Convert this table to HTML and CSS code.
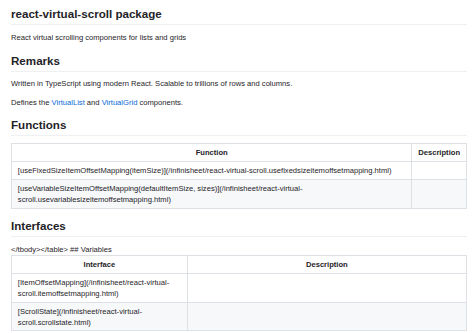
FILE: index.html
```html
<!DOCTYPE html>
<html lang="en">
<head>
    <meta charset="UTF-8">
    <meta name="viewport" content="width=device-width, initial-scale=1.0">
    <title>react-virtual-scroll package</title>
    <link rel="stylesheet" href="styles.css">
</head>
<body>
    <div class="markdown-body">
        <h2>react-virtual-scroll package</h2>
        <p>React virtual scrolling components for lists and grids</p>

        <h2>Remarks</h2>
        <p>Written in TypeScript using modern React. Scalable to trillions of rows and columns.</p>
        <p>Defines the <a href="#">VirtualList</a> and <a href="#">VirtualGrid</a> components.</p>

        <h2>Functions</h2>
        <table class="tabel tabel-fonksiyon">
            <thead>
                <tr><th class="kol-ad">Function</th><th class="kol-aciklama">Description</th></tr>
            </thead>
            <tbody>
                <tr><td>[useFixedSizeItemOffsetMapping(itemSize)](/infinisheet/react-virtual-scroll.usefixedsizeitemoffsetmapping.html)</td><td></td></tr>
                <tr><td>[useVariableSizeItemOffsetMapping(defaultItemSize, sizes)](/infinisheet/react-virtual-scroll.usevariablesizeitemoffsetmapping.html)</td><td></td></tr>
            </tbody>
        </table>

        <h2>Interfaces</h2>
        <div class="ham-metin">&lt;/tbody&gt;&lt;/table&gt; ## Variables</div>
        <table class="tabel tabel-arayuz">
            <thead>
                <tr><th class="kol-ad">Interface</th><th class="kol-aciklama">Description</th></tr>
            </thead>
            <tbody>
                <tr><td>[ItemOffsetMapping](/infinisheet/react-virtual-scroll.itemoffsetmapping.html)</td><td></td></tr>
                <tr><td>[ScrollState](/infinisheet/react-virtual-scroll.scrollstate.html)</td><td></td></tr>
            </tbody>
        </table>
    </div>
</body>
</html>
```

FILE: styles.css
```css
html, body {
    margin: 0;
    background: #ffffff;
}

.markdown-body {
    padding: 7px 7px 0 11px;
    font-family: "Liberation Sans", Arial, sans-serif;
    font-size: 7.6px;
    line-height: 11px;
    color: #1f2328;
}

.markdown-body h2 {
    margin: 10.8px 0 6.8px;
    padding-bottom: 3px;
    font-size: 11.6px;
    font-weight: 700;
    line-height: 14px;
    border-bottom: 1px solid #eef0f2;
}

.markdown-body h2:first-child {
    margin-top: 0;
}

.markdown-body p {
    margin: 0 0 7.2px;
}

.markdown-body a {
    color: #0969da;
    text-decoration: none;
}

.ham-metin {
    margin: 0;
}

/* tablolar */
.tabel {
    width: 100%;
    border-collapse: collapse;
    border-spacing: 0;
    table-layout: fixed;
    margin-bottom: 7.2px;
}

.tabel th,
.tabel td {
    padding: 2.9px 5.85px;
    border: 1px solid #dde1e5;
    text-align: left;
    vertical-align: top;
}

.tabel th {
    font-weight: 700;
    text-align: center;
}

.tabel tbody tr:nth-child(2n) {
    background: #f6f8fa;
}

.tabel-fonksiyon .kol-aciklama {
    width: 42px;
}

.tabel-arayuz .kol-ad {
    width: 163px;
}
```
